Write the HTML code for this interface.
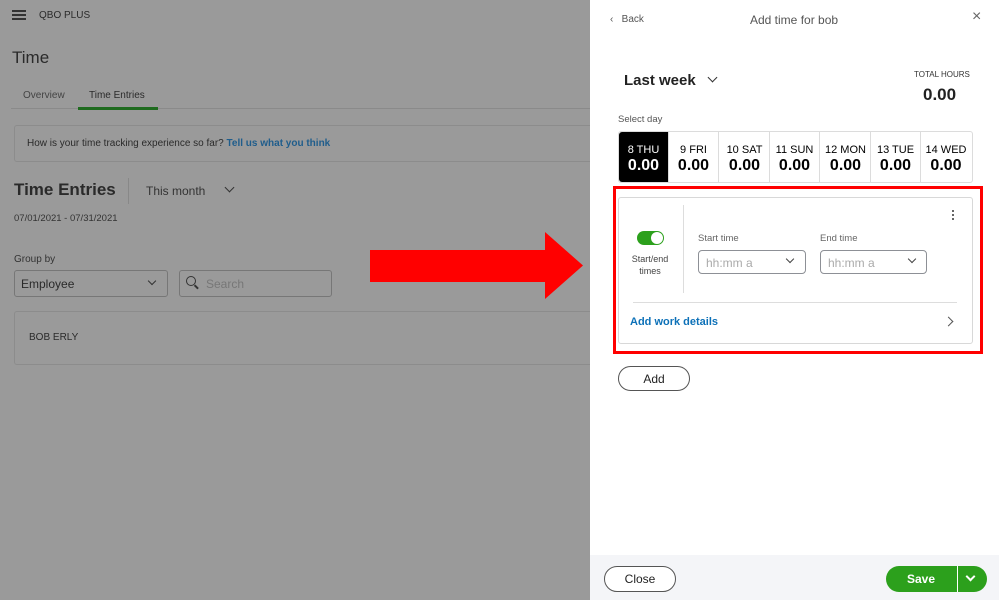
<!DOCTYPE html>
<html><head><style>
*{box-sizing:border-box;margin:0;padding:0}
body{width:999px;height:604px;position:relative;overflow:hidden;background:#fff;font-family:"Liberation Sans",sans-serif;}
.l{position:absolute;left:0;top:0;width:590px;height:600px;background:#9a9a9a;color:#2a2a2a}
.a{position:absolute;white-space:nowrap}
.r{position:absolute;left:590px;top:0;width:409px;height:600px;background:#fff;color:#393a3d}
.day{position:absolute;top:132px;width:50px;height:50px;border-right:1px solid #dcdcdc;text-align:center;font-size:11px;padding-top:12px;color:#000}
.day b{display:block;font-size:16px;margin-top:1px}
.sel{border:1px solid #8d9096;border-radius:4px;height:24px;width:108px;font-size:12px;color:#aaa;padding:5px 7px}
</style></head><body>
<div class="l">
 <div class="a" style="left:12px;top:10px;width:14px;height:2px;background:#333;box-shadow:0 4px #333,0 8px #333"></div>
 <div class="a" style="left:39px;top:10px;font-size:10px">QBO PLUS</div>
 <div class="a" style="left:12px;top:48px;font-size:17px">Time</div>
 <div class="a" style="left:23px;top:90px;font-size:10px;color:#444">Overview</div>
 <div class="a" style="left:89px;top:90px;font-size:10px">Time Entries</div>
 <div class="a" style="left:11px;top:108px;width:579px;height:1px;background:#8a8a8a"></div>
 <div class="a" style="left:78px;top:107px;width:80px;height:3px;background:#1f6b1f"></div>
 <div class="a" style="left:14px;top:125px;width:580px;height:37px;border:1px solid #8c8c8c;border-right:none;border-radius:3px"></div>
 <div class="a" style="left:27px;top:138px;font-size:10px">How is your time tracking experience so far? <span style="color:#1f5d8c;font-weight:bold">Tell us what you think</span></div>
 <div class="a" style="left:14px;top:180px;font-size:17px;font-weight:bold">Time Entries</div>
 <div class="a" style="left:128px;top:178px;width:1px;height:26px;background:#888"></div>
 <div class="a" style="left:146px;top:184px;font-size:12px;color:#333">This month</div>
 <div class="a" style="left:226px;top:184px;width:7px;height:7px;border-right:1.5px solid #333;border-bottom:1.5px solid #333;transform:rotate(45deg)"></div>
 <div class="a" style="left:14px;top:213px;font-size:9.5px;color:#333">07/01/2021 - 07/31/2021</div>
 <div class="a" style="left:14px;top:254px;font-size:10px;color:#333">Group by</div>
 <div class="a" style="left:14px;top:270px;width:154px;height:27px;border:1px solid #777;border-radius:3px;font-size:12px;padding:6px 6px">Employee</div>
 <div class="a" style="left:149px;top:278px;width:6px;height:6px;border-right:1.5px solid #333;border-bottom:1.5px solid #333;transform:rotate(45deg)"></div>
 <div class="a" style="left:179px;top:270px;width:153px;height:27px;border:1px solid #777;border-radius:3px;font-size:12px;padding:6px 0 0 26px;color:#777">Search</div>
 <div class="a" style="left:186px;top:276px;width:10px;height:10px;border:1.5px solid #333;border-radius:50%"></div>
 <div class="a" style="left:194px;top:286px;width:5px;height:1.5px;background:#333;transform:rotate(45deg)"></div>
 <div class="a" style="left:14px;top:311px;width:580px;height:54px;border:1px solid #8c8c8c;border-right:none;border-radius:3px"></div>
 <div class="a" style="left:29px;top:332px;font-size:10px">BOB ERLY</div>
 <div class="a" style="left:370px;top:250px;width:180px;height:32px;background:#f00"></div>
 <svg class="a" style="left:545px;top:232px" width="40" height="67"><polygon points="0,0 38,33.5 0,67" fill="#f00"/></svg>
</div>
<div class="r">
 <div class="a" style="left:20px;top:14px;font-size:10px;color:#555">‹&nbsp;&nbsp;&nbsp;Back</div>
 <div class="a" style="left:160px;top:13px;font-size:12px;color:#555">Add time for bob</div>
 <div class="a" style="left:382px;top:8px;font-size:16px;color:#666">×</div>
 <div class="a" style="left:34px;top:72px;font-size:15px;font-weight:bold;color:#222">Last week</div>
 <div class="a" style="left:119px;top:74px;width:7px;height:7px;border-right:1.5px solid #333;border-bottom:1.5px solid #333;transform:rotate(45deg)"></div>
 <div class="a" style="left:324px;top:70px;font-size:8px;color:#333">TOTAL HOURS</div>
 <div class="a" style="left:333px;top:85px;font-size:17px;font-weight:bold;color:#222">0.00</div>
 <div class="a" style="left:28px;top:114px;font-size:9.5px;color:#555">Select day</div>
 <div class="a" style="left:28px;top:131px;width:355px;height:52px;border:1px solid #dcdcdc;border-radius:3px"></div>
 <div class="day" style="left:29px;background:#000;color:#fff;border-radius:3px 0 0 3px">8 THU<b>0.00</b></div>
 <div class="day" style="left:79px">9 FRI<b>0.00</b></div>
 <div class="day" style="left:130px">10 SAT<b>0.00</b></div>
 <div class="day" style="left:180px">11 SUN<b>0.00</b></div>
 <div class="day" style="left:231px">12 MON<b>0.00</b></div>
 <div class="day" style="left:281px">13 TUE<b>0.00</b></div>
 <div class="day" style="left:331px;border:none">14 WED<b>0.00</b></div>
 <div class="a" style="left:23px;top:186px;width:370px;height:168px;border:3px solid #f00"></div>
 <div class="a" style="left:28px;top:197px;width:355px;height:147px;border:1px solid #d8d8d8;border-radius:3px"></div>
 <div class="a" style="left:47px;top:231px;width:27px;height:14px;border-radius:7px;background:#2ca01c"></div>
 <div class="a" style="left:61px;top:232px;width:12px;height:12px;border-radius:50%;background:#fff"></div>
 <div class="a" style="left:37px;top:253px;font-size:9px;color:#444;text-align:center;width:46px;line-height:12px;white-space:normal">Start/end times</div>
 <div class="a" style="left:93px;top:205px;width:1px;height:88px;background:#ddd"></div>
 <div class="a" style="left:108px;top:233px;font-size:9.5px;color:#666">Start time</div>
 <div class="a" style="left:230px;top:233px;font-size:9.5px;color:#666">End time</div>
 <div class="a sel" style="left:108px;top:250px">hh:mm a</div>
 <div class="a sel" style="left:230px;top:250px;width:107px">hh:mm a</div>
 <div class="a" style="left:197px;top:256px;width:6px;height:6px;border-right:1.5px solid #444;border-bottom:1.5px solid #444;transform:rotate(45deg)"></div>
 <div class="a" style="left:319px;top:256px;width:6px;height:6px;border-right:1.5px solid #444;border-bottom:1.5px solid #444;transform:rotate(45deg)"></div>
 <div class="a" style="left:362px;top:210px;width:2px;height:2px;background:#666;box-shadow:0 4px #666,0 8px #666"></div>
 <div class="a" style="left:43px;top:302px;width:324px;height:1px;background:#ddd"></div>
 <div class="a" style="left:40px;top:316px;font-size:11px;font-weight:bold;color:#0d71b8">Add work details</div>
 <div class="a" style="left:355px;top:318px;width:7px;height:7px;border-right:1.5px solid #555;border-top:1.5px solid #555;transform:rotate(45deg)"></div>
 <div class="a" style="left:28px;top:366px;width:72px;height:25px;border:1.5px solid #555;border-radius:13px;font-size:12px;text-align:center;padding-top:5px;color:#222">Add</div>
 <div class="a" style="left:0;top:555px;width:409px;height:45px;background:#f4f5f8"></div>
 <div class="a" style="left:14px;top:566px;width:72px;height:26px;border:1.5px solid #555;border-radius:13px;font-size:12px;text-align:center;padding-top:5px;color:#222;background:#fff">Close</div>
 <div class="a" style="left:296px;top:566px;width:101px;height:26px;border-radius:13px;background:#2ca01c"></div>
 <div class="a" style="left:296px;top:572px;width:70px;font-size:12px;font-weight:bold;color:#fff;text-align:center">Save</div>
 <div class="a" style="left:367px;top:566px;width:1px;height:26px;background:#fff"></div>
 <div class="a" style="left:377px;top:573px;width:7px;height:7px;border-right:2px solid #fff;border-bottom:2px solid #fff;transform:rotate(45deg)"></div>
</div>
</body></html>
